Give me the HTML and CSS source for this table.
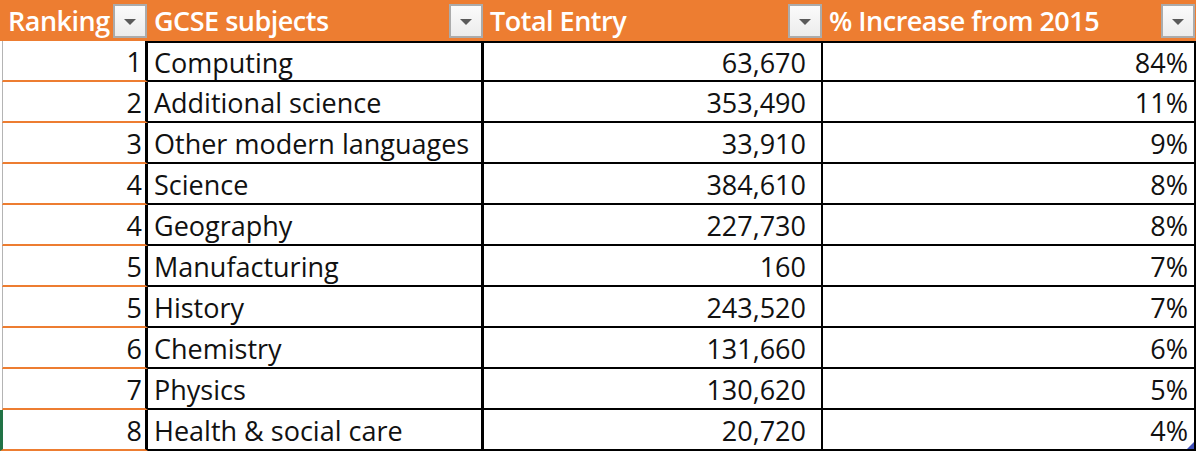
FILE: index.html
```html
<!DOCTYPE html>
<html>
<head>
<meta charset="utf-8">
<link rel="stylesheet" href="styles.css">
</head>
<body>
<div class="sheet">
  <div class="row head">
    <div class="hc hc1"><span class="ht">Ranking</span><span class="dd"><i></i></span></div>
    <div class="hc"><span class="ht">GCSE subjects</span><span class="dd"><i></i></span></div>
    <div class="hc"><span class="ht">Total Entry</span><span class="dd"><i></i></span></div>
    <div class="hc"><span class="ht">% Increase from 2015</span><span class="dd"><i></i></span></div>
  </div>
  <div class="row first">
    <div class="c c1">1</div><div class="c c2">Computing</div><div class="c c3">63,670</div><div class="c c4">84%</div>
  </div>
  <div class="row">
    <div class="c c1">2</div><div class="c c2">Additional science</div><div class="c c3">353,490</div><div class="c c4">11%</div>
  </div>
  <div class="row">
    <div class="c c1">3</div><div class="c c2">Other modern languages</div><div class="c c3">33,910</div><div class="c c4">9%</div>
  </div>
  <div class="row">
    <div class="c c1">4</div><div class="c c2">Science</div><div class="c c3">384,610</div><div class="c c4">8%</div>
  </div>
  <div class="row">
    <div class="c c1">4</div><div class="c c2">Geography</div><div class="c c3">227,730</div><div class="c c4">8%</div>
  </div>
  <div class="row">
    <div class="c c1">5</div><div class="c c2">Manufacturing</div><div class="c c3">160</div><div class="c c4">7%</div>
  </div>
  <div class="row">
    <div class="c c1">5</div><div class="c c2">History</div><div class="c c3">243,520</div><div class="c c4">7%</div>
  </div>
  <div class="row">
    <div class="c c1">6</div><div class="c c2">Chemistry</div><div class="c c3">131,660</div><div class="c c4">6%</div>
  </div>
  <div class="row">
    <div class="c c1">7</div><div class="c c2">Physics</div><div class="c c3">130,620</div><div class="c c4">5%</div>
  </div>
  <div class="row last">
    <div class="c c1">8</div><div class="c c2">Health &amp; social care</div><div class="c c3">20,720</div><div class="c c4">4%<span class="handle"></span></div>
  </div>
</div>
</body>
</html>
```
FILE: styles.css
```css
html, body {
  margin: 0;
  padding: 0;
  background: #ffffff;
}
body {
  width: 1200px;
  height: 453px;
  overflow: hidden;
  font-family: "Open Sans", "Liberation Sans", sans-serif;
  font-size: 27px;
  color: #111;
}
.sheet {
  width: 1196px;
}
.row {
  display: grid;
  grid-template-columns: 148px 336px 339px 373px;
  height: 41px;
}
.head {
  background: #ed7d31;
}
.hc {
  display: flex;
  align-items: center;
  padding-left: 6px;
  overflow: hidden;
  white-space: nowrap;
  color: #ffffff;
  font-weight: 600;
  letter-spacing: -0.5px;
}
.hc1 {
  padding-left: 8px;
}
.ht {
  flex: 1;
  line-height: 41px;
  padding-bottom: 1px;
}
.dd {
  flex: none;
  box-sizing: border-box;
  width: 34px;
  height: 34px;
  margin-right: 1px;
  border: 2px solid #ababab;
  background: linear-gradient(#fbfbfb, #ececec);
  display: flex;
  align-items: center;
  justify-content: center;
}
.dd i {
  display: block;
  width: 0;
  height: 0;
  margin-top: 2px;
  border-left: 6px solid transparent;
  border-right: 6px solid transparent;
  border-top: 6px solid #5a5a5a;
}
.c {
  box-sizing: border-box;
  height: 41px;
  line-height: 39px;
  padding-top: 1px;
  white-space: nowrap;
  border-bottom: 2px solid #000;
  position: relative;
}
.c1 {
  margin-left: 2px;
  border-left: 1px solid #b4b4b4;
  border-right: 3px solid #000;
  border-bottom-color: #ed7d31;
  text-align: right;
  padding-right: 3px;
}
.c2 {
  border-right: 3px solid #000;
  padding-left: 6px;
}
.c3 {
  border-right: 2px solid #000;
  text-align: right;
  padding-right: 15px;
}
.c4 {
  border-right: 2px solid #000;
  text-align: right;
  padding-right: 6px;
}
.first .c2, .first .c3, .first .c4 {
  border-top: 2px solid #000;
  line-height: 37px;
}
.last .c1 {
  margin-left: 0;
  border-left: 3px solid #217346;
}
.handle {
  position: absolute;
  right: 0;
  bottom: 0;
  width: 0;
  height: 0;
  border-left: 7px solid transparent;
  border-bottom: 7px solid #3f4fb8;
}
```
